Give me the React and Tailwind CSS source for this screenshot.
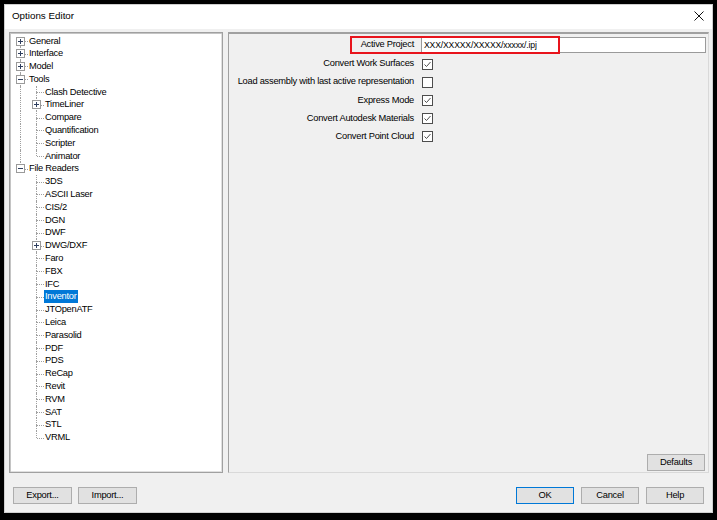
import React from 'react';

const tree = [
  { label: 'General', box: '+' },
  { label: 'Interface', box: '+' },
  { label: 'Model', box: '+' },
  {
    label: 'Tools',
    box: '-',
    children: [
      { label: 'Clash Detective' },
      { label: 'TimeLiner', box: '+' },
      { label: 'Compare' },
      { label: 'Quantification' },
      { label: 'Scripter' },
      { label: 'Animator' },
    ],
  },
  {
    label: 'File Readers',
    box: '-',
    children: [
      { label: '3DS' },
      { label: 'ASCII Laser' },
      { label: 'CIS/2' },
      { label: 'DGN' },
      { label: 'DWF' },
      { label: 'DWG/DXF', box: '+' },
      { label: 'Faro' },
      { label: 'FBX' },
      { label: 'IFC' },
      { label: 'Inventor', selected: true },
      { label: 'JTOpenATF' },
      { label: 'Leica' },
      { label: 'Parasolid' },
      { label: 'PDF' },
      { label: 'PDS' },
      { label: 'ReCap' },
      { label: 'Revit' },
      { label: 'RVM' },
      { label: 'SAT' },
      { label: 'STL' },
      { label: 'VRML' },
    ],
  },
];

function flatten(nodes, guides = [], depth = 0, out = []) {
  nodes.forEach((n, i) => {
    const last = i === nodes.length - 1;
    out.push({ ...n, guides, first: depth === 0 && i === 0, last });
    if (n.children) flatten(n.children, [...guides, !last], depth + 1, out);
  });
  return out;
}

const rows = flatten(tree);

const options = [
  { label: 'Convert Work Surfaces', checked: true },
  { label: 'Load assembly with last active representation', checked: false },
  { label: 'Express Mode', checked: true },
  { label: 'Convert Autodesk Materials', checked: true },
  { label: 'Convert Point Cloud', checked: true },
];

function ExpandBox({ sign }) {
  return (
    <svg width="9" height="9" viewBox="0 0 9 9" className="absolute left-[4px] top-[2px]">
      <rect x="0.5" y="0.5" width="8" height="8" fill="#fff" stroke="#9a9a9a" />
      <line x1="2" y1="4.5" x2="7" y2="4.5" stroke="#2f3f5f" />
      {sign === '+' && <line x1="4.5" y1="2" x2="4.5" y2="7" stroke="#2f3f5f" />}
    </svg>
  );
}

function TreeRow({ row }) {
  return (
    <div className="flex h-[12.8px] items-center">
      {row.guides.map((g, i) => (
        <div key={i} className="relative w-4 h-full shrink-0">
          {g && <div className="absolute left-[8px] top-0 bottom-0 border-l border-dotted border-[#a0a0a0]" />}
        </div>
      ))}
      <div className="relative w-4 h-full shrink-0">
        {!row.first && <div className="absolute left-[8px] top-0 h-1/2 border-l border-dotted border-[#a0a0a0]" />}
        {!row.last && <div className="absolute left-[8px] top-1/2 bottom-0 border-l border-dotted border-[#a0a0a0]" />}
        <div className="absolute left-[9px] right-0 top-1/2 border-t border-dotted border-[#a0a0a0]" />
        {row.box && <ExpandBox sign={row.box} />}
      </div>
      <span
        className={
          'px-[1px] leading-[12.8px] whitespace-nowrap ' +
          (row.selected ? 'bg-[#0078d7] text-white' : 'text-black')
        }
      >
        {row.label}
      </span>
    </div>
  );
}

function CheckBox({ checked }) {
  return (
    <svg width="11" height="11" viewBox="0 0 11 11" className="shrink-0">
      <rect x="0.5" y="0.5" width="10" height="10" fill="#fff" stroke="#4d4d4d" />
      {checked && <path d="M2.5 5.5 L4.5 7.5 L8.5 3" fill="none" stroke="#4d4d4d" strokeWidth="1" />}
    </svg>
  );
}

function Btn({ children, primary, wide }) {
  return (
    <button
      className={
        'h-[17px] bg-[#e1e1e1] border flex items-center justify-center text-black ' +
        (wide ? 'w-[59px] ' : 'w-[58px] ') +
        (primary ? 'border-[#0078d7]' : 'border-[#adadad]')
      }
    >
      {children}
    </button>
  );
}

export default function App() {
  return (
    <div
      className="w-[717px] h-[520px] bg-black pt-[4px] pl-[4px] text-[9.3px] tracking-[-0.25px] text-black"
      style={{ fontFamily: '"Liberation Sans", Arial, sans-serif' }}
    >
      <div className="w-[709px] h-[509px] bg-[#f0f0f0] border border-[#cfcfcf] flex flex-col">
        {/* title bar */}
        <div className="h-[24px] bg-white flex items-center justify-between pl-[7px] pr-[8px] pb-[2px]">
          <span className="text-[9.8px] tracking-normal">Options Editor</span>
          <svg width="10" height="10" viewBox="0 0 10 10">
            <path d="M0.5 0.5 L9.5 9.5 M9.5 0.5 L0.5 9.5" stroke="#111" strokeWidth="1" />
          </svg>
        </div>

        <div className="flex flex-col pl-[4px] pr-[3px] pt-[3px]">
          <div className="flex gap-[5px] h-[441px]">
            {/* tree */}
            <div className="w-[214px] h-full bg-white border border-[#a0a0a0] shadow-[inset_1px_1px_0_#c4c4c4,inset_-1px_-1px_0_#e0e0e0] pt-[1.5px] pl-[2px] overflow-hidden">
              {rows.map((r) => (
                <TreeRow key={r.label} row={r} />
              ))}
            </div>

            {/* settings panel */}
            <div className="relative flex-1 h-full flex flex-col border-t-2 border-l border-t-[#a0a0a0] border-l-[#a0a0a0] border-r border-b border-r-[#d9d9d9] border-b-[#d9d9d9]">
              <div className="flex items-center h-[16px] mt-[3px] pr-[2px]">
                <span className="w-[185px] shrink-0 text-right">Active Project</span>
                <div className="ml-[7px] flex-1 h-full bg-white border border-[#9a9a9a] flex items-center pl-[2px] text-[8.6px] tracking-[-0.15px]">
                  XXX/XXXXX/XXXXX/xxxxx/.ipj
                </div>
              </div>
              <div className="mt-[2px]">
                {options.map((o) => (
                  <div key={o.label} className="flex items-center h-[18.2px]">
                    <span className="w-[185px] shrink-0 text-right whitespace-nowrap">{o.label}</span>
                    <div className="ml-[8px]">
                      <CheckBox checked={o.checked} />
                    </div>
                  </div>
                ))}
              </div>
              <div className="mt-auto self-end mr-[3px] mb-[1px]">
                <Btn>Defaults</Btn>
              </div>
              <div className="absolute left-[121px] top-[2px] w-[210px] h-[18px] border-2 border-[#e8141c]" />
            </div>
          </div>

          {/* bottom buttons */}
          <div className="flex items-center justify-between mt-[14px] pl-[4px] pr-[5px]">
            <div className="flex gap-[6px]">
              <Btn wide>Export...</Btn>
              <Btn wide>Import...</Btn>
            </div>
            <div className="flex gap-[7px]">
              <Btn primary>OK</Btn>
              <Btn>Cancel</Btn>
              <Btn>Help</Btn>
            </div>
          </div>
        </div>
      </div>
    </div>
  );
}
